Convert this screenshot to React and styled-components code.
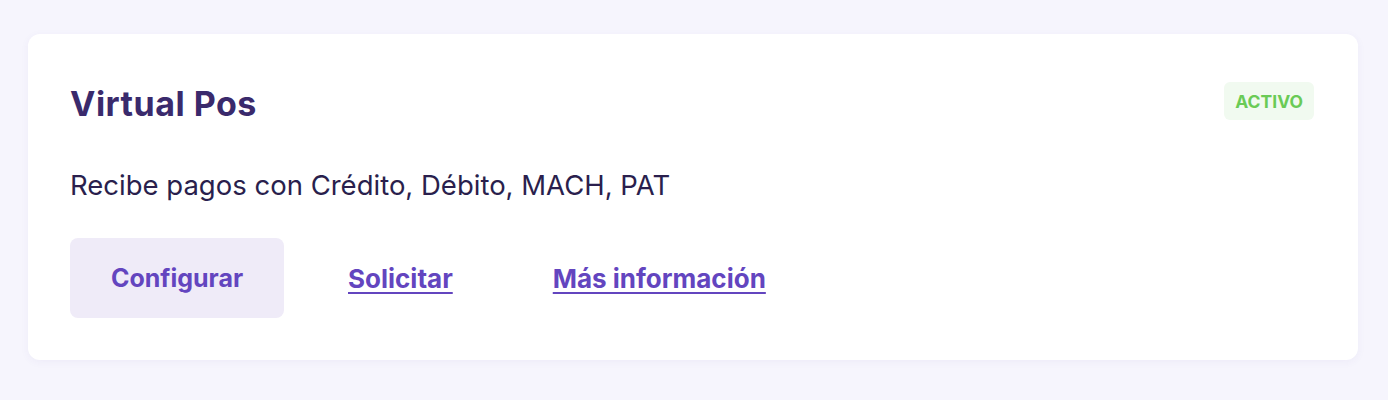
import styled, { createGlobalStyle } from "styled-components";

const GlobalStyle = createGlobalStyle`
  body {
    margin: 0;
    background: #f6f5fd;
    font-family: Inter, "Noto Sans", sans-serif;
  }
`;

const Page = styled.div`
  padding: 34px 30px 40px 28px;
`;

const Card = styled.div`
  background: #ffffff;
  border-radius: 12px;
  box-shadow: 0 2px 8px rgba(80, 60, 160, 0.05);
  padding: 42px 44px 42px 42px;
`;

const Header = styled.div`
  display: flex;
  justify-content: space-between;
  align-items: flex-start;
`;

const Title = styled.h2`
  margin: 0;
  font-size: 34px;
  line-height: 56px;
  font-weight: 700;
  color: #3a2a6c;
  letter-spacing: 0.5px;
`;

const Badge = styled.span`
  margin-top: 6px;
  padding: 0 11px;
  height: 38px;
  display: inline-flex;
  align-items: center;
  border-radius: 6px;
  background: #f1faf0;
  color: #6acb56;
  font-size: 17.5px;
  font-weight: 700;
`;

const Description = styled.p`
  margin: 36px 0 0;
  font-size: 27.5px;
  line-height: 34px;
  color: #2a1f4d;
`;

const Actions = styled.div`
  display: flex;
  align-items: center;
  margin-top: 36px;
`;

const PrimaryButton = styled.button`
  width: 214px;
  height: 80px;
  border: none;
  border-radius: 8px;
  background: #efebf8;
  color: #6345bf;
  font-family: inherit;
  font-size: 25px;
  font-weight: 700;
  cursor: pointer;
`;

const LinkAction = styled.a`
  margin-left: ${(p) => p.$offset}px;
  color: #6345bf;
  font-size: 26px;
  font-weight: 700;
  text-decoration: underline;
  text-decoration-thickness: 2px;
  text-underline-offset: 4px;
  cursor: pointer;
`;

export default function App() {
  return (
    <>
      <GlobalStyle />
      <Page>
        <Card>
          <Header>
            <Title>Virtual Pos</Title>
            <Badge>ACTIVO</Badge>
          </Header>
          <Description>Recibe pagos con Crédito, Débito, MACH, PAT</Description>
          <Actions>
            <PrimaryButton>Configurar</PrimaryButton>
            <LinkAction $offset={64}>Solicitar</LinkAction>
            <LinkAction $offset={100}>Más información</LinkAction>
          </Actions>
        </Card>
      </Page>
    </>
  );
}
